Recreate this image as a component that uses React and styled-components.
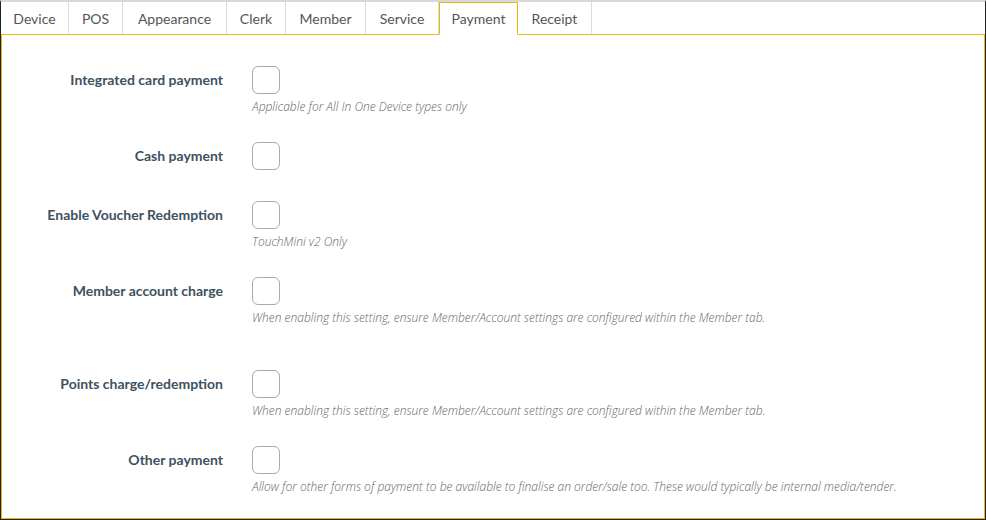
import React from 'react';
import styled, { createGlobalStyle } from 'styled-components';

const Global = createGlobalStyle`
  html, body { margin: 0; background: #fff; }
  body { font-family: Lato, "Open Sans", sans-serif; }
`;

const Frame = styled.div`
  width: 986px;
  height: 520px;
  box-sizing: border-box;
  border: 1px solid #222;
  border-top: 2px solid #d8d8d8;
  display: flex;
  flex-direction: column;
`;

const TabBar = styled.div`
  display: flex;
  height: 32px;
  border-bottom: 1px solid #e8b80c;
`;

const Tab = styled.div`
  width: ${p => p.w}px;
  box-sizing: border-box;
  display: flex;
  align-items: center;
  justify-content: center;
  font-size: 14px;
  color: #555;
  background: #fff;
  border-right: 1px solid #ddd;
  ${p => p.active && `
    border: 1px solid #e8b80c;
    border-bottom: 1px solid #fff;
    margin-bottom: -1px;
    height: 33px;
  `}
`;

const Panel = styled.div`
  flex: 1;
  border: 1px solid #e8b80c;
  border-top: none;
  padding-top: 31px;
`;

const Row = styled.div`
  display: grid;
  grid-template-columns: 221px auto;
  column-gap: 29px;
  margin-bottom: ${p => p.mb}px;
`;

const Label = styled.div`
  text-align: right;
  font-size: 14px;
  font-weight: 700;
  color: #3e5160;
  line-height: 28px;
`;

const Box = styled.div`
  width: 26px;
  height: 26px;
  border: 1px solid #aaa;
  border-radius: 6px;
`;

const Hint = styled.div`
  font-family: "Open Sans", sans-serif;
  font-size: 12px;
  font-style: italic;
  font-weight: 300;
  color: #666;
  margin-top: 5px;
  line-height: 16px;
  white-space: nowrap;
`;

const tabs = [
  ['Device', 68], ['POS', 54], ['Appearance', 104], ['Clerk', 59],
  ['Member', 80], ['Service', 73], ['Payment', 79], ['Receipt', 74],
];

const member = 'When enabling this setting, ensure Member/Account settings are configured within the Member tab.';

const rows = [
  ['Integrated card payment', 'Applicable for All In One Device types only', 27],
  ['Cash payment', null, 31],
  ['Enable Voucher Redemption', 'TouchMini v2 Only', 27],
  ['Member account charge', member, 44],
  ['Points charge/redemption', member, 27],
  ['Other payment', 'Allow for other forms of payment to be available to finalise an order/sale too. These would typically be internal media/tender.', 0],
];

export default function App() {
  return (
    <Frame>
      <Global />
      <TabBar>
        {tabs.map(([t, w]) => <Tab key={t} w={w} active={t === 'Payment'}>{t}</Tab>)}
      </TabBar>
      <Panel>
        {rows.map(([l, h, mb]) => (
          <Row key={l} mb={mb}>
            <Label>{l}</Label>
            <div>
              <Box />
              {h && <Hint>{h}</Hint>}
            </div>
          </Row>
        ))}
      </Panel>
    </Frame>
  );
}
